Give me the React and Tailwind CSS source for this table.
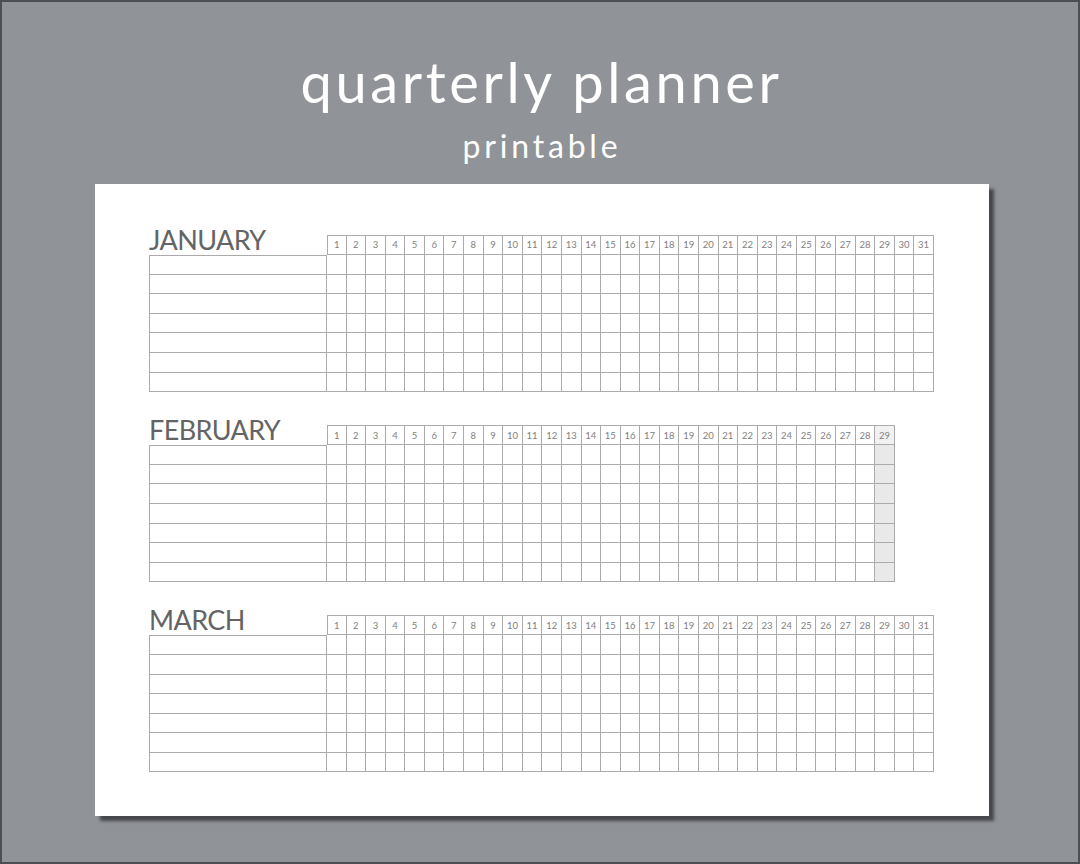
import React from 'react';

const months = [
  { name: 'JANUARY', days: 31 },
  { name: 'FEBRUARY', days: 29, shadeLast: true },
  { name: 'MARCH', days: 31 },
];

const ROWS = 7;
const line = 'border-[#ababab]';

const MonthGrid = ({ name, days, shadeLast }) => {
  const cols = days === 31
    ? 'grid-cols-[178px_repeat(31,19.58px)]'
    : 'grid-cols-[178px_repeat(29,19.58px)]';

  return (
    <div className={`grid ${cols} grid-rows-[20px_repeat(7,19.6px)]`}>
      {/* label cell */}
      <div className="flex items-end pb-[2px]">
        <span className="text-[27px] leading-none tracking-[-0.6px] text-[#646464]" style={{ fontFamily: 'Lato, sans-serif' }}>
          {name}
        </span>
      </div>
      {Array.from({ length: days }, (_, i) => (
        <div
          key={`h${i}`}
          className={`flex items-center justify-center border-t border-r border-b ${line} ${i === 0 ? 'border-l' : ''} ${shadeLast && i === days - 1 ? 'bg-[#f1f1f1]' : ''} text-[9.5px] text-[#808080] pt-[1px]`}
          style={{ fontFamily: 'Lato, sans-serif' }}
        >
          {i + 1}
        </div>
      ))}

      {Array.from({ length: ROWS }, (_, r) => (
        <React.Fragment key={r}>
          <div className={`border-l border-r border-b ${line} ${r === 0 ? 'border-t' : ''}`} />
          {Array.from({ length: days }, (_, i) => (
            <div
              key={i}
              className={`border-r border-b ${line} ${shadeLast && i === days - 1 ? 'bg-[#e9e9e9]' : ''}`}
            />
          ))}
        </React.Fragment>
      ))}
    </div>
  );
};

export default function App() {
  return (
    <div className="w-[1080px] h-[864px] bg-[#909398] border-2 border-[#4c4f54] flex flex-col overflow-hidden">
      {/* heading */}
      <div className="flex flex-col items-center text-white pt-[52px]" style={{ fontFamily: 'Lato, sans-serif' }}>
        <h1 className="text-[56px] leading-none tracking-[3.6px] pl-[3px]">quarterly planner</h1>
        <p className="text-[32px] leading-none mt-[20px] tracking-[3.8px] pl-[4px]">printable</p>
      </div>

      {/* sheet */}
      <div className="ml-[93px] mt-[22px] w-[894px] h-[632px] bg-white shadow-[5px_5px_3px_rgba(45,47,52,0.75)] pt-[51px] pl-[54px] flex flex-col gap-[33px]">
        {months.map(m => (
          <MonthGrid key={m.name} {...m} />
        ))}
      </div>
    </div>
  );
}
